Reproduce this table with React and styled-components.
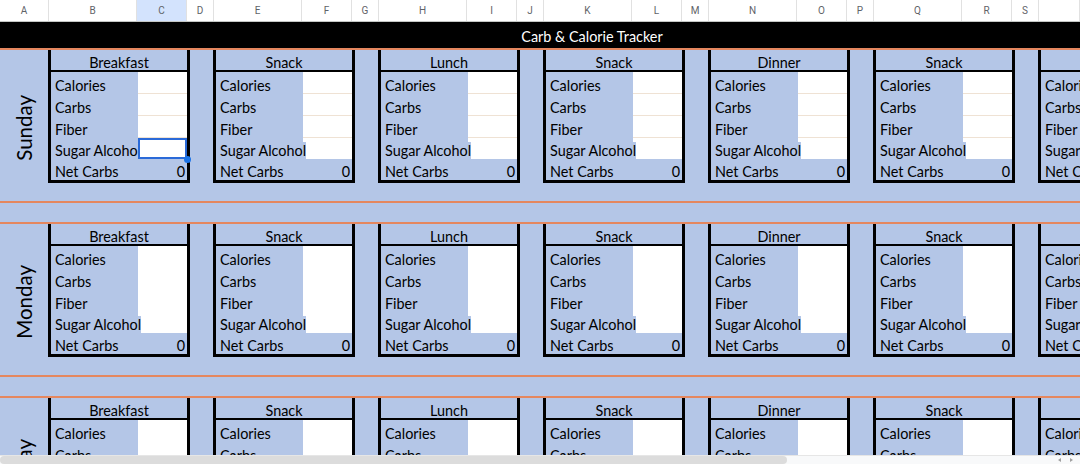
import React from 'react';
import styled, { createGlobalStyle } from 'styled-components';

const BLUE = '#b4c6e7';
const ORANGE = '#e5875f';

const Global = createGlobalStyle`
  html, body { margin: 0; padding: 0; background: #fff; }
  body { font-family: Lato, "Liberation Sans", sans-serif; color: #000; }
`;

const Page = styled.div`
  width: 1080px;
  height: 464px;
  display: flex;
  flex-direction: column;
  overflow: hidden;
  background: ${BLUE};
`;

const ColHeader = styled.div`
  flex: none;
  height: 22px;
  box-sizing: border-box;
  display: grid;
  grid-template-columns: 49px repeat(6, 88px 50px 27px) 1fr;
  background: #fff;
  border-bottom: 1px solid #c4c7c5;
`;

const ColCell = styled.div`
  border-right: 1px solid #e1e1e1;
  display: flex;
  align-items: center;
  justify-content: center;
  font-family: Roboto, "Liberation Sans", sans-serif;
  font-size: 10px;
  color: #5f6368;
  background: ${(p) => (p.$active ? '#d3e3fd' : '#fff')};
`;

const Sheet = styled.div`
  flex: 1;
  min-height: 0;
  overflow: hidden;
  display: flex;
  flex-direction: column;
`;

const Title = styled.div`
  flex: none;
  width: 1184px;
  height: 28px;
  box-sizing: border-box;
  background: #000;
  border-bottom: 2px solid ${ORANGE};
  color: #fff;
  font-size: 14.4px;
  line-height: 29px;
  text-align: center;
`;

const DayBlock = styled.div`
  flex: none;
  display: flex;
`;

const DayLabel = styled.div`
  flex: none;
  width: 48px;
  padding-top: 22px;
  box-sizing: border-box;
  display: flex;
  align-items: center;
  justify-content: center;
`;

const DayText = styled.span`
  writing-mode: vertical-rl;
  transform: rotate(180deg);
  font-size: 20.5px;
  line-height: 1;
`;

const Boxes = styled.div`
  display: flex;
  gap: 23px;
`;

const Box = styled.div`
  flex: none;
  width: 142px;
  height: 133px;
  box-sizing: border-box;
  border: 3px solid #000;
  border-top: none;
  display: flex;
  flex-direction: column;
`;

const MealHeader = styled.div`
  height: 22px;
  box-sizing: border-box;
  border-bottom: 2px solid #000;
  font-size: 14.4px;
  line-height: 25px;
  text-align: center;
  white-space: nowrap;
  overflow: hidden;
`;

const Row = styled.div`
  display: grid;
  grid-template-columns: 87px 49px;
  height: ${(p) => p.$h}px;
`;

const LabelCell = styled.div`
  position: relative;
  z-index: 1;
  box-sizing: border-box;
  padding: 4px 0 0 4px;
  display: flex;
  align-items: center;
  white-space: nowrap;
  font-size: 14.4px;
`;

const LabelText = styled.span`
  background: ${BLUE};
`;

const ValueCell = styled.div`
  position: relative;
  box-sizing: border-box;
  background: ${(p) => (p.$total ? BLUE : '#fff')};
  border-bottom: ${(p) => (p.$lined ? '1px solid #efe2d4' : 'none')};
  display: flex;
  align-items: center;
  justify-content: flex-end;
  padding: 4px 2px 0 0;
  font-size: 14.4px;
  z-index: ${(p) => (p.$selected ? 2 : 0)};
  box-shadow: ${(p) => (p.$selected ? 'inset 0 0 0 2px #2a6ad8' : 'none')};

  &::after {
    content: '';
    display: ${(p) => (p.$selected ? 'block' : 'none')};
    position: absolute;
    right: -4px;
    bottom: -4px;
    width: 7px;
    height: 7px;
    border-radius: 50%;
    background: #1a73e8;
  }
`;

const Divider = styled.div`
  flex: none;
  margin-top: 18px;
  height: 19px;
  border-top: 2px solid ${ORANGE};
  border-bottom: 2px solid ${ORANGE};
`;

const Scrollbar = styled.div`
  flex: none;
  height: 9px;
  box-sizing: border-box;
  background: #f8f9fa;
  border-top: 1px solid #e6e6e6;
  display: flex;
  align-items: center;
`;

const Thumb = styled.div`
  width: 787px;
  height: 8px;
  border-radius: 4px;
  background: #dcdcdc;
`;

const Arrows = styled.div`
  margin-left: auto;
  margin-right: 7px;
  display: flex;
  align-items: center;
  gap: 9px;
`;

const Arrow = styled.span`
  width: 0;
  height: 0;
  border-top: 2.5px solid transparent;
  border-bottom: 2.5px solid transparent;
  border-left: ${(p) => (p.$dir === 'right' ? '3px solid #a0a0a0' : 'none')};
  border-right: ${(p) => (p.$dir === 'left' ? '3px solid #a0a0a0' : 'none')};
`;

const COLS = ['A', 'B', 'C', 'D', 'E', 'F', 'G', 'H', 'I', 'J', 'K', 'L', 'M', 'N', 'O', 'P', 'Q', 'R', 'S', ''];
const MEALS = ['Breakfast', 'Snack', 'Lunch', 'Snack', 'Dinner', 'Snack', 'Snack'];
const ROWS = [
  { label: 'Calories', h: 22 },
  { label: 'Carbs', h: 22 },
  { label: 'Fiber', h: 22 },
  { label: 'Sugar Alcohol', h: 21 },
  { label: 'Net Carbs', h: 21, total: true },
];
const DAYS = ['Sunday', 'Monday', 'Tuesday'];

function MealBox({ meal, lined, selectedRow }) {
  return (
    <Box>
      <MealHeader>{meal}</MealHeader>
      {ROWS.map((r, i) => (
        <Row key={r.label} $h={r.h}>
          <LabelCell>
            <LabelText>{r.label}</LabelText>
          </LabelCell>
          <ValueCell
            $total={r.total}
            $lined={lined && i < 3}
            $selected={selectedRow === i}
          >
            {r.total ? '0' : ''}
          </ValueCell>
        </Row>
      ))}
    </Box>
  );
}

export default function App() {
  return (
    <Page>
      <Global />
      <ColHeader>
        {COLS.map((c, i) => (
          <ColCell key={i} $active={c === 'C'}>{c}</ColCell>
        ))}
      </ColHeader>
      <Sheet>
        <Title>Carb &amp; Calorie Tracker</Title>
        {DAYS.map((day, d) => (
          <React.Fragment key={day}>
            <DayBlock>
              <DayLabel>
                <DayText>{day}</DayText>
              </DayLabel>
              <Boxes>
                {MEALS.map((m, i) => (
                  <MealBox
                    key={i}
                    meal={m}
                    lined={d === 0}
                    selectedRow={d === 0 && i === 0 ? 3 : -1}
                  />
                ))}
              </Boxes>
            </DayBlock>
            <Divider />
          </React.Fragment>
        ))}
      </Sheet>
      <Scrollbar>
        <Thumb />
        <Arrows>
          <Arrow $dir="left" />
          <Arrow $dir="right" />
        </Arrows>
      </Scrollbar>
    </Page>
  );
}
